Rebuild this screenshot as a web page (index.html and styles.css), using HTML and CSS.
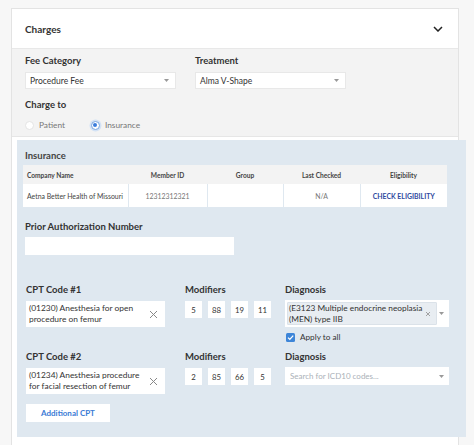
FILE: index.html
```html
<!DOCTYPE html>
<html>
<head>
<meta charset="utf-8">
<link rel="stylesheet" href="styles.css">
</head>
<body>
<div class="page">
  <div class="card">
    <div class="card-header">
      <span class="card-title">Charges</span>
      <svg class="chevron" width="10" height="6" viewBox="0 0 10 6"><path d="M1 1 L5 5 L9 1" fill="none" stroke="#222" stroke-width="1.5"/></svg>
    </div>
    <div class="card-top">
      <div class="field-row">
        <div class="field">
          <div class="label">Fee Category</div>
          <div class="select"><span>Procedure Fee</span><svg width="5" height="3" viewBox="0 0 5 3"><path d="M0 0h5L2.5 3z" fill="#999"/></svg></div>
        </div>
        <div class="field">
          <div class="label">Treatment</div>
          <div class="select"><span>Alma V-Shape</span><svg width="5" height="3" viewBox="0 0 5 3"><path d="M0 0h5L2.5 3z" fill="#999"/></svg></div>
        </div>
      </div>
      <div class="label charge-label">Charge to</div>
      <div class="radios">
        <label class="radio"><span class="dot"></span>Patient</label>
        <label class="radio checked"><span class="dot"></span>Insurance</label>
      </div>
    </div>
    <div class="card-body">
      <div class="panel">
        <div class="section-title">Insurance</div>
        <table class="ins-table">
          <colgroup>
            <col class="c1"><col class="c2"><col class="c3"><col class="c4"><col class="c5">
          </colgroup>
          <thead>
            <tr><th class="left">Company Name</th><th>Member ID</th><th>Group</th><th>Last Checked</th><th>Eligibility</th></tr>
          </thead>
          <tbody>
            <tr><td class="left">Aetna Better Health of Missouri</td><td class="muted">12312312321</td><td></td><td class="muted">N/A</td><td class="link">CHECK ELIGIBILITY</td></tr>
          </tbody>
        </table>
        <div class="label prior-label">Prior Authorization Number</div>
        <div class="text-input"></div>

        <div class="cpt">
          <div class="cpt-row">
            <div class="col-cpt">
              <div class="label">CPT Code #1</div>
              <div class="cpt-box"><span>(01230) Anesthesia for open<br>procedure on femur</span><svg class="x" width="9" height="9" viewBox="0 0 9 9"><path d="M1 1L8 8M8 1L1 8" stroke="#888" stroke-width="1"/></svg></div>
            </div>
            <div class="col-mod">
              <div class="label">Modifiers</div>
              <div class="mods"><span class="mod">5</span><span class="mod">88</span><span class="mod">19</span><span class="mod">11</span></div>
            </div>
            <div class="col-diag">
              <div class="label">Diagnosis</div>
              <div class="diag-select tall">
                <div class="tag"><span>(E3123 Multiple endocrine neoplasia<br>(MEN) type IIB</span><svg class="tag-x" width="6" height="6" viewBox="0 0 6 6"><path d="M1 1L5 5M5 1L1 5" stroke="#999" stroke-width="0.9"/></svg></div>
                <svg class="arrow" width="5" height="3" viewBox="0 0 5 3"><path d="M0 0h5L2.5 3z" fill="#999"/></svg>
              </div>
              <div class="apply"><span class="check"><svg width="9" height="9" viewBox="0 0 9 9"><path d="M2 4.6L3.8 6.4L7.2 2.6" fill="none" stroke="#fff" stroke-width="1.3"/></svg></span>Apply to all</div>
            </div>
          </div>
          <div class="cpt-row second">
            <div class="col-cpt">
              <div class="label">CPT Code #2</div>
              <div class="cpt-box"><span>(01234) Anesthesia procedure<br>for facial resection of femur</span><svg class="x" width="9" height="9" viewBox="0 0 9 9"><path d="M1 1L8 8M8 1L1 8" stroke="#888" stroke-width="1"/></svg></div>
            </div>
            <div class="col-mod">
              <div class="label">Modifiers</div>
              <div class="mods"><span class="mod">2</span><span class="mod">85</span><span class="mod">66</span><span class="mod">5</span></div>
            </div>
            <div class="col-diag">
              <div class="label">Diagnosis</div>
              <div class="diag-select short">
                <span class="placeholder">Search for ICD10 codes...</span>
                <svg class="arrow" width="5" height="3" viewBox="0 0 5 3"><path d="M0 0h5L2.5 3z" fill="#999"/></svg>
              </div>
            </div>
          </div>
          <button class="btn">Additional CPT</button>
        </div>
      </div>
    </div>
  </div>
</div>
</body>
</html>
```
FILE: styles.css
```css
* { box-sizing: border-box; }
html, body { margin: 0; padding: 0; }
body {
  background: #f7f7f7;
  font-family: Lato, "Open Sans", "Liberation Sans", sans-serif;
  color: #333;
  width: 474px;
  height: 445px;
  overflow: hidden;
}
.page { padding: 8px 0 0 11px; }
.card {
  width: 448px;
  height: 440px;
  border: 1px solid #e3e3e3;
  border-bottom: none;
  background: #fff;
}
.card-header {
  height: 40px;
  display: flex;
  align-items: center;
  justify-content: space-between;
  padding: 0 15px 0 13px;
  border-bottom: 1px solid #e8e8e8;
}
.card-title { font-size: 10px; font-weight: 700; color: #333; }
.card-top {
  background: #f3f3f3;
  padding: 6px 0 5px 13px;
  border-bottom: 1px solid #e6e6e6;
}
.label {
  font-size: 9.5px;
  line-height: 12px;
  font-weight: 700;
  color: #333;
}
.field-row { display: flex; gap: 19px; }
.field { width: 151px; }
.select {
  margin-top: 5px;
  height: 17px;
  background: #fff;
  border: 1px solid #e8e8e8;
  display: flex;
  align-items: center;
  justify-content: space-between;
  padding: 0 6px 0 4px;
  font-size: 8.5px;
  color: #333;
}
.charge-label { margin-top: 10px; }
.radios { display: flex; align-items: center; height: 12px; margin-top: 8px; gap: 26px; }
.radio { display: flex; align-items: center; font-size: 8.3px; color: #777; }
.radio .dot {
  width: 9px; height: 9px; border-radius: 50%;
  background: #fff; border: 1px solid #e4e4e4;
  margin-right: 5px;
  position: relative;
}
.radio.checked .dot {
  border-color: #7aa7e0;
  box-shadow: 0 0 0 1.5px #d3e2f5;
}
.radio.checked .dot::after {
  content: "";
  position: absolute;
  left: 1.5px; top: 1.5px;
  width: 4px; height: 4px;
  border-radius: 50%;
  background: #3b7ddb;
}
.card-body { padding-top: 3px; }
.panel {
  margin-left: 5px;
  width: 449px;
  height: 297px;
  background: #dfe8f0;
  padding: 10px 0 15px 8px;
}
.section-title { font-size: 9.5px; line-height: 12px; font-weight: 700; color: #444; margin-bottom: 3px; }
.ins-table {
  margin-left: -2px;
  width: 424px;
  border-collapse: collapse;
  table-layout: fixed;
}
.ins-table .c1 { width: 105px; }
.ins-table .c2 { width: 79px; }
.ins-table .c3 { width: 76px; }
.ins-table .c4 { width: 77px; }
.ins-table .c5 { width: 87px; }
.ins-table th {
  height: 19px;
  background: #f3f3f3;
  font-size: 6.6px;
  font-weight: 700;
  color: #444;
  text-align: center;
  padding: 0;
}
.ins-table td {
  height: 23px;
  background: #fff;
  font-size: 6.9px;
  color: #444;
  text-align: center;
  padding: 0;
  border-left: 1px solid #dfe8f0;
}
.ins-table td:first-child { border-left: none; }
.ins-table .left { text-align: left; padding-left: 4px; }
.ins-table .muted { color: #777; }
.ins-table .link { color: #2f4a9e; font-weight: 700; }
.prior-label { margin-top: 14px; }
.text-input {
  margin-top: 4px;
  width: 209px;
  height: 18px;
  background: #fff;
}
.cpt { margin-top: 29px; padding-left: 1px; }
.cpt-row { display: flex; align-items: flex-start; }
.cpt-row.second { margin-top: 9px; }
.col-cpt { width: 139px; }
.col-mod { width: 88px; margin-left: 20px; }
.col-diag { width: 164px; margin-left: 12px; }
.cpt-box {
  margin-top: 5px;
  height: 26px;
  background: #fff;
  display: flex;
  align-items: center;
  justify-content: space-between;
  padding: 0 7px 0 3px;
  font-size: 8.4px;
  line-height: 11px;
  color: #333;
  white-space: nowrap;
}
.mods { display: flex; gap: 6px; margin-top: 5px; }
.mod {
  width: 17px; height: 17px;
  background: #fff;
  font-size: 7.8px;
  color: #333;
  display: flex; align-items: center; justify-content: center;
}
.diag-select {
  margin-top: 4px;
  background: #fff;
  display: flex;
  align-items: center;
  justify-content: space-between;
  padding: 0 5px 0 2px;
}
.diag-select.tall { height: 27px; }
.diag-select.short { height: 18px; padding-left: 5px; }
.tag {
  width: 150px;
  height: 23px;
  background: #e8edf2;
  border: 1px solid #dbe2e9;
  border-radius: 1px;
  display: flex;
  align-items: center;
  justify-content: space-between;
  padding: 0 5px 0 1px;
  font-size: 8.3px;
  line-height: 11px;
  color: #333;
  white-space: nowrap;
}
.placeholder { font-size: 8px; color: #aab1b8; }
.apply {
  margin-top: 5px;
  height: 10px;
  display: flex;
  align-items: center;
  font-size: 8.2px;
  color: #333;
}
.check {
  width: 9px; height: 9px;
  background: #3d85d8;
  border-radius: 1.5px;
  margin: 0 5px 0 1px;
  display: flex;
}
.btn {
  display: block;
  margin-top: 10px;
  width: 84px;
  height: 18px;
  background: #fff;
  border: none;
  padding: 0;
  font-family: Lato, "Open Sans", "Liberation Sans", sans-serif;
  font-size: 8px;
  font-weight: 700;
  color: #3a7bd5;
}
```
